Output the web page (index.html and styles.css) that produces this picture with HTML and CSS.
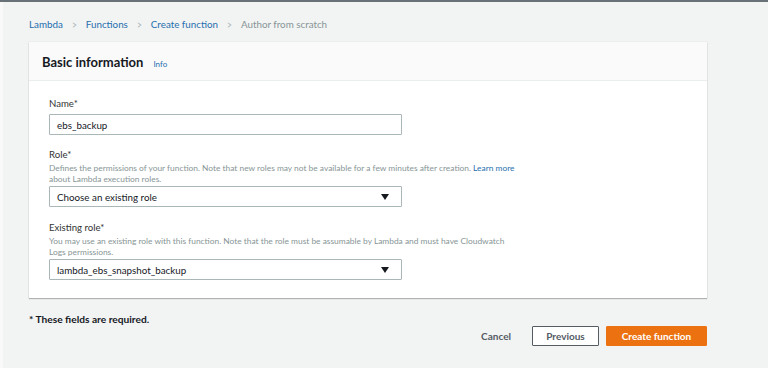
FILE: index.html
```html
<!DOCTYPE html>
<html lang="en">
<head>
  <meta charset="UTF-8" />
  <meta name="viewport" content="width=device-width, initial-scale=1.0"/>
  <title>Lambda - Create function</title>
  <link rel="stylesheet" href="styles.css">
</head>
<body>
  <div class="page">
    <nav class="crumbs">
      <a href="#">Lambda</a>
      <span class="sep">&gt;</span>
      <a href="#">Functions</a>
      <span class="sep">&gt;</span>
      <a href="#">Create function</a>
      <span class="sep">&gt;</span>
      <span class="current">Author from scratch</span>
    </nav>

    <div class="card">
      <div class="card-head">
        <h2>Basic information</h2>
        <a href="#" class="info">Info</a>
      </div>
      <div class="card-body">
        <div class="field">
          <label>Name*</label>
          <div class="input">ebs_backup</div>
        </div>

        <div class="field">
          <label>Role*</label>
          <p class="hint">Defines the permissions of your function. Note that new roles may not be available for a few minutes after creation. <a href="#">Learn more</a><br>about Lambda execution roles.</p>
          <div class="input select">
            <span>Choose an existing role</span>
            <span class="caret"></span>
          </div>
        </div>

        <div class="field field-wide">
          <label>Existing role*</label>
          <p class="hint">You may use an existing role with this function. Note that the role must be assumable by Lambda and must have Cloudwatch<br>Logs permissions.</p>
          <div class="input select">
            <span>lambda_ebs_snapshot_backup</span>
            <span class="caret"></span>
          </div>
        </div>
      </div>
    </div>

    <div class="footer">
      <p class="required">* These fields are required.</p>
      <div class="actions">
        <button class="btn-link">Cancel</button>
        <button class="btn">Previous</button>
        <button class="btn primary">Create function</button>
      </div>
    </div>
  </div>
</body>
</html>
```

FILE: styles.css
```css
html, body {
  margin: 0;
  height: 100%;
}
body {
  font-family: Lato, "Open Sans", Arial, sans-serif;
  background: #f2f3f3;
  color: #16191f;
  border-top: 2px solid #687078;
  box-sizing: border-box;
}
.page {
  height: 100%;
  padding: 0 61px 0 29px;
  border-left: 3px solid #f9f9f9;
  box-sizing: border-box;
}
.crumbs {
  display: flex;
  align-items: center;
  height: 44px;
  box-sizing: border-box;
  font-size: 9.8px;
  gap: 8px;
  margin-left: -3px;
}
.crumbs a {
  color: #1f6fae;
  text-decoration: none;
}
.crumbs .sep {
  color: #aab7b8;
  font-size: 12px;
  transform: scaleX(0.7);
}
.crumbs .current {
  color: #879596;
}
.card {
  background: #fff;
  box-shadow: 0 1px 1px rgba(0,0,0,0.25), 0 0 1px rgba(0,0,0,0.15);
  margin-left: -3px;
  margin-top: -4px;
}
.card-head {
  display: flex;
  align-items: center;
  height: 39px;
  padding: 2px 13px 0;
  background: #fafafa;
  border-bottom: 1px solid #eaeded;
  box-sizing: border-box;
}
.card-head h2 {
  margin: 0;
  font-size: 13px;
  font-weight: 700;
}
.info {
  margin-left: 10px;
  margin-top: 3px;
  font-size: 8px;
  color: #1f6fae;
  text-decoration: none;
}
.card-body {
  padding: 17px 20px 18px;
}
.field + .field {
  margin-top: 14px;
}
.field + .field-wide {
  margin-top: 15px;
}
.field label {
  display: block;
  font-size: 9.6px;
  color: #333;
  margin-bottom: 5px;
}
.hint {
  margin: -2px 0 2px;
  font-size: 8.4px;
  line-height: 10.5px;
  color: #879596;
}
.hint a {
  color: #1f6fae;
  text-decoration: none;
}
.input {
  display: flex;
  align-items: center;
  justify-content: space-between;
  width: 353px;
  height: 21px;
  padding: 0 6px 0 7px;
  box-sizing: border-box;
  border: 1px solid #aab7b8;
  border-radius: 1px;
  font-size: 9.8px;
  color: #16191f;
}
.caret {
  width: 0;
  height: 0;
  border-left: 4px solid transparent;
  border-right: 4px solid transparent;
  border-top: 6px solid #16191f;
  margin-right: 6px;
}
.footer {
  display: flex;
  justify-content: space-between;
  margin-left: -3px;
}
.required {
  margin: 15px 0 0;
  font-size: 10.2px;
  font-weight: 700;
}
.actions {
  display: flex;
  align-items: center;
  gap: 7px;
  margin-top: 28px;
}
.actions button {
  font-family: inherit;
  font-size: 10px;
  font-weight: 700;
  height: 20px;
  cursor: pointer;
}
.btn-link {
  background: none;
  border: 0;
  color: #545b64;
  margin-right: 8px;
}
.btn {
  width: 67px;
  background: #fff;
  border: 1px solid #545b64;
  border-radius: 1px;
  color: #545b64;
}
.btn.primary {
  width: 101px;
  background: #ec7211;
  border-color: #ec7211;
  color: #fff;
}
```
